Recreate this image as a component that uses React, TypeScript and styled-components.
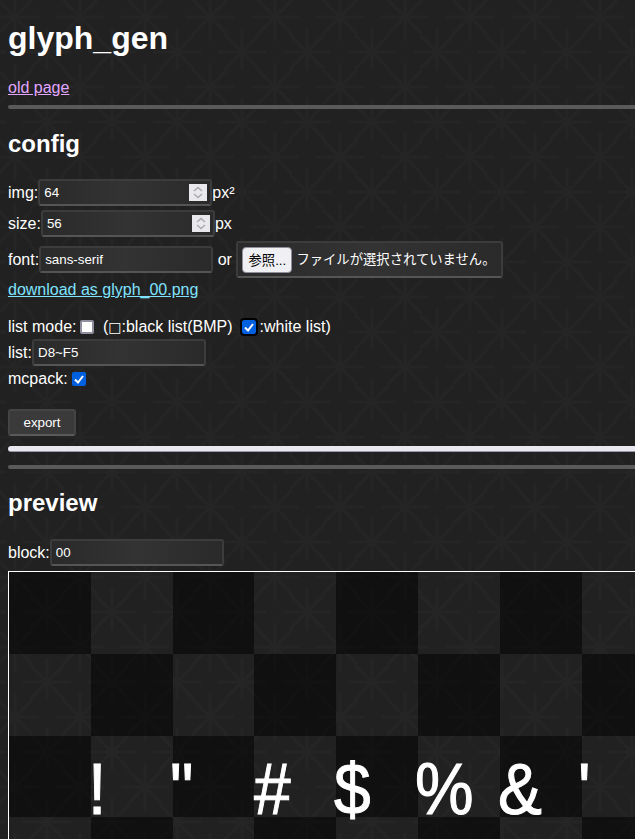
import styled, { createGlobalStyle } from "styled-components";

// faint hemp-leaf texture of the page background
const spokes = (x: number, y: number) =>
  [0, 45, 90, 135, 180, 225, 270, 315]
    .map((a) => {
      const r = (a * Math.PI) / 180;
      return `M${x} ${y}L${(x + Math.cos(r) * 24).toFixed(1)} ${(y + Math.sin(r) * 24).toFixed(1)}`;
    })
    .join("");

const asanoha = encodeURIComponent(
  `<svg xmlns="http://www.w3.org/2000/svg" width="65" height="70" viewBox="0 0 65 70"><path fill="none" stroke="#252525" stroke-width="2.5" d="${
    spokes(15, 17) + spokes(80, 17) + spokes(47, 52) + spokes(15, 87) + spokes(80, 87) + spokes(-18, 52)
  }"/></svg>`
);

const tick = encodeURIComponent(
  `<svg xmlns="http://www.w3.org/2000/svg" viewBox="0 0 14 14"><path d="M3 7.5L6 10.5L11 4" fill="none" stroke="#fff" stroke-width="2"/></svg>`
);

const GlobalStyle = createGlobalStyle`
  html {
    overflow: hidden;
  }
  body {
    margin: 8px;
    width: 1320px;
    color: #fff;
    font-family: "Liberation Sans", Arial, "Noto Sans CJK JP", sans-serif;
    font-size: 16px;
    background-color: #212121;
    background-image: url("data:image/svg+xml,${asanoha}");
  }
`;

const Title = styled.h1`
  margin: 12px 0 22px;
  font-size: 32px;
  line-height: 37px;
  font-weight: 700;
`;

const Heading = styled.h2<{ $top?: number }>`
  margin: ${(props) => props.$top ?? 21}px 0 ${(props) => 42 - (props.$top ?? 21)}px;
  font-size: 24px;
  line-height: 28px;
  font-weight: 700;
`;

const Anchor = styled.a<{ $tone: string }>`
  color: ${(props) => props.$tone};
  text-decoration: underline;
`;

const Line = styled.div`
  line-height: 18px;
`;

const Rule = styled.hr<{ $top?: number }>`
  height: 4px;
  margin: ${(props) => props.$top ?? 8}px 0 0;
  border: 0;
  border-radius: 2px;
  background: #5a5a5a;
`;

const Row = styled.div<{ $gap?: number; $top?: number }>`
  display: flex;
  align-items: center;
  margin-top: ${(props) => props.$top ?? 0}px;
  margin-bottom: ${(props) => props.$gap ?? 4}px;
  line-height: 18px;
  white-space: nowrap;
`;

const Field = styled.input`
  box-sizing: border-box;
  width: 174px;
  height: 27px;
  margin: 0;
  padding: 1px 4px;
  color: #fff;
  font-family: inherit;
  font-size: 13.333px;
  background: linear-gradient(90deg, #2a2a2a, #333 50%, #2a2a2a);
  border: 2px solid #3c3c3c;
  border-bottom-color: #555;
  border-radius: 3px;
  outline: none;

  &::-webkit-inner-spin-button {
    display: none;
  }
`;

const NumberBox = styled.div`
  position: relative;
  display: flex;
`;

const Spin = styled.svg`
  position: absolute;
  top: 5px;
  right: 5px;
  width: 18px;
  height: 17px;
  background: #e9e9ed;
`;

const Or = styled.span`
  margin: 0 4.5px;
`;

const FileBox = styled.div`
  display: flex;
  align-items: center;
  box-sizing: border-box;
  width: 267px;
  height: 37px;
  padding: 0 4px;
  font-size: 13.333px;
  background: linear-gradient(90deg, #2a2a2a, #333 50%, #2a2a2a);
  border: 2px solid #3c3c3c;
  border-bottom-color: #555;
  border-radius: 3px;
`;

const Browse = styled.button`
  width: 50px;
  height: 26px;
  margin-right: 4px;
  padding: 0;
  color: #000;
  font-family: inherit;
  font-size: 13.333px;
  background: #efeff4;
  border: 1px solid #8f8f9d;
  border-radius: 4px;
`;

const Check = styled.input<{ $focused?: boolean }>`
  appearance: none;
  box-sizing: border-box;
  width: 14px;
  height: 14px;
  margin: 2px 4px ${(props) => (props.$focused ? "2px 9px" : "2px 4px")};
  background: #fff;
  border: 2px solid #8f8f9d;
  border-radius: 2px;
  outline: ${(props) => (props.$focused ? "2px solid #000" : "none")};

  &:checked {
    background: #0060df url("data:image/svg+xml,${tick}") center / 14px no-repeat;
    border: 0;
  }
`;

const BoxGlyph = styled.span`
  font-family: "DejaVu Sans", sans-serif;
  font-size: 14px;
`;

const ExportButton = styled.button`
  display: block;
  width: 68px;
  height: 27px;
  margin: 0 0 10px;
  padding: 0;
  color: #fff;
  font-family: inherit;
  font-size: 13.333px;
  background: #3a3a3a;
  border: 2px solid #444;
  border-bottom-color: #5a5a5a;
  border-radius: 3px;
`;

const Progress = styled.div`
  box-sizing: border-box;
  height: 6px;
  border-radius: 3px;
  background: #e8e8f0;
  border-bottom: 1px solid #9a98a8;
`;

const Board = styled.div`
  display: grid;
  grid-template-columns: repeat(16, 81.8px);
  grid-auto-rows: 81.8px;
  width: 1308.8px;
  border: 1px solid #fff;
  overflow: hidden;
`;

const Cell = styled.div<{ $dark: boolean }>`
  background: ${(props) => (props.$dark ? "rgba(0, 0, 0, 0.5)" : "transparent")};
`;

const Glyph = styled.span<{ $shift: number }>`
  display: inline-block;
  margin-left: ${(props) => props.$shift}px;
  color: #fff;
  font-size: 71.6px;
  line-height: 106px;
  white-space: pre;
  transform: scaleX(0.92);
  transform-origin: left;
  -webkit-text-stroke: 1px #fff;
`;

// ink of the glyphs starts right at the cell edge
const shifts: Record<string, number> = {
  "!": -3,
  '"': -3,
  "#": 0,
  $: -2,
  "%": -3,
  "&": -2,
  "'": -4,
};

const cells = Array.from({ length: 64 }, (_, i) => {
  const row = Math.floor(i / 16);
  return {
    dark: (i + row) % 2 === 0,
    glyph: row === 2 && i < 40 ? String.fromCharCode(i) : "",
  };
});

const SpinIcon = () => (
  <Spin viewBox="0 0 18 17">
    <path d="M5 7L9 3.5L13 7M5 10L9 13.5L13 10" fill="none" stroke="#a9a9b0" strokeWidth="1.5" />
  </Spin>
);

export default function App() {
  return (
    <>
      <GlobalStyle />
      <Title>glyph_gen</Title>
      <Line>
        <Anchor href="#" $tone="#e1a6ff">
          old page
        </Anchor>
      </Line>
      <Rule />
      <Heading>config</Heading>
      <Row>
        img:
        <NumberBox>
          <Field type="number" defaultValue={64} />
          <SpinIcon />
        </NumberBox>
        px²
      </Row>
      <Row>
        size:
        <NumberBox>
          <Field type="number" defaultValue={56} />
          <SpinIcon />
        </NumberBox>
        px
      </Row>
      <Row $gap={3}>
        font:<Field defaultValue="sans-serif" />
        <Or>or</Or>
        <FileBox>
          <Browse>参照...</Browse>
          ファイルが選択されていません。
        </FileBox>
      </Row>
      <Line>
        <Anchor href="#" $tone="#7fe3ff">
          download as glyph_00.png
        </Anchor>
      </Line>
      <Row $top={19} $gap={3}>
        list mode:
        <Check type="checkbox" />
        &nbsp;(<BoxGlyph>□</BoxGlyph>:black list(BMP)
        <Check type="checkbox" defaultChecked $focused />
        :white list)
      </Row>
      <Row>
        list:<Field defaultValue="D8~F5" />
      </Row>
      <Row $gap={21}>
        mcpack:
        <Check type="checkbox" defaultChecked />
      </Row>
      <ExportButton>export</ExportButton>
      <Progress />
      <Rule $top={13} />
      <Heading $top={20}>preview</Heading>
      <Row $gap={5}>
        block:<Field defaultValue="00" />
      </Row>
      <Board>
        {cells.map((cell, i) => (
          <Cell key={i} $dark={cell.dark}>
            {cell.glyph && <Glyph $shift={shifts[cell.glyph] ?? 0}>{cell.glyph}</Glyph>}
          </Cell>
        ))}
      </Board>
    </>
  );
}
